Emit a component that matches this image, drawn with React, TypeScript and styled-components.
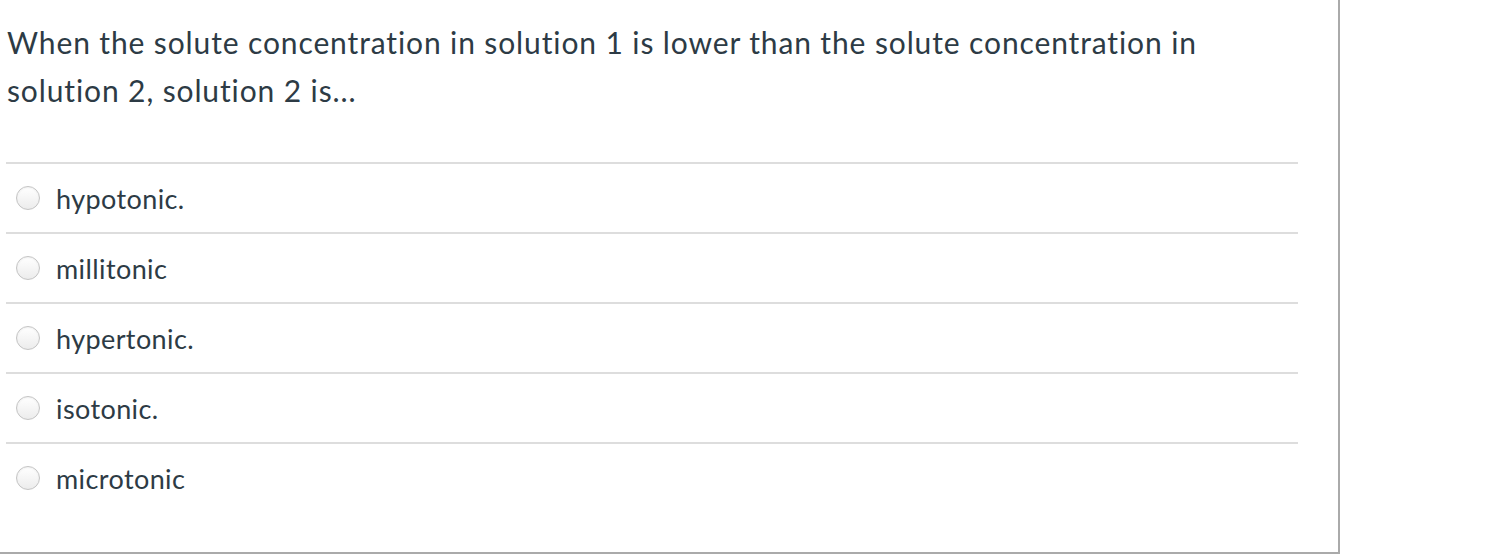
import styled, { createGlobalStyle } from "styled-components";

const answers = ["hypotonic.", "millitonic", "hypertonic.", "isotonic.", "microtonic"];

const GlobalStyle = createGlobalStyle`
  html, body {
    margin: 0;
    padding: 0;
    background: #fff;
  }
  body {
    font-family: Lato, "Open Sans", sans-serif;
    color: #2d3b45;
  }
`;

export default function App() {
  return (
    <>
      <GlobalStyle />
      <QuestionPanel>
        <QuestionText>
          When the solute concentration in solution 1 is lower than the solute concentration in
          solution 2, solution 2 is...
        </QuestionText>
        <AnswerList>
          {answers.map((label) => (
            <AnswerRow key={label}>
              <Radio type="radio" name="answer" />
              <AnswerLabel>{label}</AnswerLabel>
            </AnswerRow>
          ))}
        </AnswerList>
      </QuestionPanel>
    </>
  );
}

const QuestionPanel = styled.div`
  width: 1338px;
  height: 552px;
  border-right: 2px solid #aaaaaa;
  border-bottom: 2px solid #aaaaaa;
  display: flex;
  flex-direction: column;
`;

const QuestionText = styled.p`
  margin: 0;
  padding: 18px 0 0 7px;
  width: 1250px;
  font-size: 30px;
  letter-spacing: 0.88px;
  line-height: 48px;
  height: 144px;
`;

const AnswerList = styled.div`
  margin-left: 6px;
  width: 1292px;
  display: flex;
  flex-direction: column;
`;

const AnswerRow = styled.label`
  display: flex;
  align-items: center;
  gap: 16px;
  height: 68px;
  padding-left: 10px;
  border-top: 2px solid #dddddd;
`;

const Radio = styled.input`
  appearance: none;
  margin: 0;
  width: 24px;
  height: 24px;
  border-radius: 50%;
  border: 1px solid #c4c4c4;
  background: linear-gradient(#ffffff, #ececec);
  box-shadow: inset 0 1px 2px rgba(0, 0, 0, 0.06);
`;

const AnswerLabel = styled.span`
  font-size: 27px;
  letter-spacing: 0.4px;
`;
